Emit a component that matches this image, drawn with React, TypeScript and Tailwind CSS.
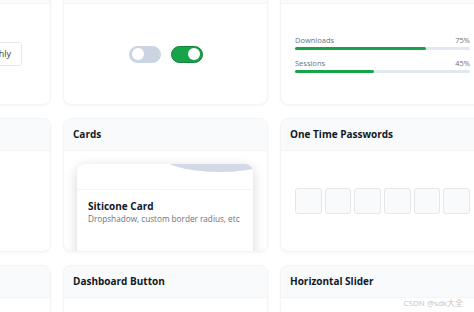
import React from "react";

function Panel({ title, children }: { title: string; children?: React.ReactNode }) {
  return (
    <div className="flex h-[134px] flex-col overflow-hidden rounded-lg border border-gray-100 bg-white shadow-[0_1px_3px_rgba(0,0,0,0.04)]">
      <div className="flex h-8 shrink-0 items-center border-b border-gray-100 bg-[#f9fafb] pl-[9px] text-[10px] font-bold text-[#111827]">
        {title}
      </div>
      <div className="relative flex flex-1 items-center justify-center">{children}</div>
    </div>
  );
}

function Toggle({ on }: { on?: boolean }) {
  return (
    <div
      className={
        on
          ? "flex h-[17px] w-[32px] items-center justify-end rounded-full border border-[#15803d] bg-[#16a34a] px-[2px]"
          : "flex h-[17px] w-[32px] items-center justify-start rounded-full border border-[#cbd5e1] bg-[#cbd5e1] px-[2px]"
      }
    >
      <div className="h-[12px] w-[12px] rounded-full bg-white" />
    </div>
  );
}

function Progress({ label, value }: { label: string; value: number }) {
  return (
    <div className="flex flex-col gap-[2px]">
      <div className="flex justify-between text-[7.5px] leading-[10px] text-[#6b7280]">
        <span>{label}</span>
        <span>{value}%</span>
      </div>
      <div className="h-[3px] w-full rounded-full bg-[#e2e8f0]">
        <div className="h-full rounded-full bg-[#16a34a]" style={{ width: `${value}%` }} />
      </div>
    </div>
  );
}

export default function App() {
  return (
    <div
      className="relative h-[312px] w-[474px] overflow-hidden bg-white"
      style={{ fontFamily: '"Open Sans", "Noto Sans", sans-serif' }}
    >
      <div className="ml-[-154px] mt-[-29px] grid w-[639px] grid-cols-[205px_205px_205px] gap-x-3 gap-y-[13px]">
        <Panel title="Plans">
          <div className="flex w-full justify-end pr-7">
            <div className="flex overflow-hidden rounded-[3px] border border-gray-200 text-[9px] text-[#374151]">
              <span className="flex h-[22px] items-center border-r border-gray-200 bg-white px-[10px]">Yearly</span>
              <span className="flex h-[22px] items-center bg-white px-[10px]">Monthly</span>
            </div>
          </div>
        </Panel>
        <Panel title="Toggle Switch">
          <div className="flex items-center gap-[10px]">
            <Toggle />
            <Toggle on />
          </div>
        </Panel>
        <Panel title="Progress Bar">
          <div className="flex w-full flex-col gap-[8px] px-[14px]">
            <Progress label="Downloads" value={75} />
            <Progress label="Sessions" value={45} />
          </div>
        </Panel>

        <Panel title="Modal" />
        <Panel title="Cards">
          <div className="absolute left-[13px] right-[14px] top-[13px] h-[120px] overflow-hidden rounded-lg bg-white shadow-[0_3px_12px_rgba(15,23,42,0.18)]">
            <div className="absolute left-[80px] top-[-32px] h-[40px] w-[125px] rounded-[50%] bg-[#d3d9e6]" />
            <div className="h-[26px] border-b border-gray-100" />
            <div className="px-[11px] pt-[10px]">
              <div className="text-[10px] font-bold leading-[13px] text-[#111827]">Siticone Card</div>
              <div className="text-[8.2px] leading-[12px] text-[#6b7280]">Dropshadow, custom border radius, etc</div>
            </div>
          </div>
        </Panel>
        <Panel title="One Time Passwords">
          <div className="flex w-full gap-[3px] px-[14px]">
            {[0, 1, 2, 3, 4, 5].map((i) => (
              <div key={i} className="h-[26px] w-[27px] rounded-[3px] border border-gray-200 bg-[#f9fafb]" />
            ))}
          </div>
        </Panel>

        <Panel title="Avatar" />
        <Panel title="Dashboard Button" />
        <Panel title="Horizontal Slider" />
      </div>
      <div
        className="absolute bottom-[3px] right-[11px] text-[8px] text-[#c4c4c4]"
        style={{ fontFamily: '"Open Sans", "Noto Sans CJK SC", sans-serif' }}
      >
        CSDN @sdk大全
      </div>
    </div>
  );
}
